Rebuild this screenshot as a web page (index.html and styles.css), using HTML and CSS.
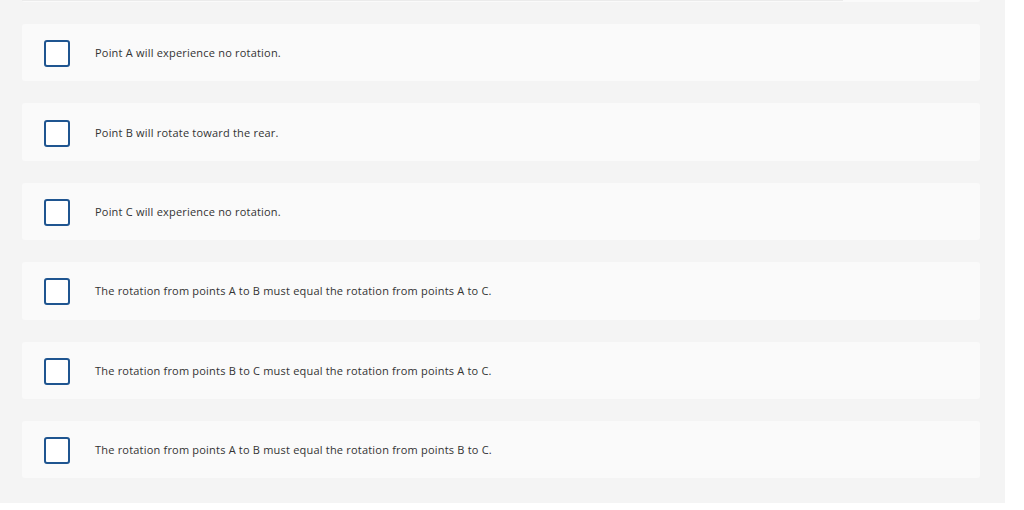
FILE: index.html
```html
<!DOCTYPE html>
<html>
<head>
<meta charset="utf-8">
<link rel="stylesheet" href="styles.css">
</head>
<body>
<div class="panel">
  <div class="stub"><div class="stub-line"></div></div>
  <div class="options">
    <label class="option"><span class="box"></span><span class="text">Point A will experience no rotation.</span></label>
    <label class="option"><span class="box"></span><span class="text">Point B will rotate toward the rear.</span></label>
    <label class="option"><span class="box"></span><span class="text">Point C will experience no rotation.</span></label>
    <label class="option"><span class="box"></span><span class="text">The rotation from points A to B must equal the rotation from points A to C.</span></label>
    <label class="option"><span class="box"></span><span class="text">The rotation from points B to C must equal the rotation from points A to C.</span></label>
    <label class="option"><span class="box"></span><span class="text">The rotation from points A to B must equal the rotation from points B to C.</span></label>
  </div>
</div>
</body>
</html>
```

FILE: styles.css
```css
html, body {
  margin: 0;
  padding: 0;
  background: #ffffff;
}
.panel {
  width: 1005px;
  height: 503px;
  box-sizing: border-box;
  background: #f4f4f4;
  padding: 0 25px 0 22px;
  font-family: "Open Sans", "Liberation Sans", sans-serif;
}
.stub {
  height: 2px;
  background: #fafafa;
  border-radius: 0 0 3px 3px;
}
.stub-line {
  width: 821px;
  height: 1px;
  background: #ebebeb;
}
.options {
  margin-top: 22px;
  display: flex;
  flex-direction: column;
  gap: 22px;
}
.option {
  display: flex;
  align-items: center;
  height: 57.4px;
  background: #fafafa;
  border-radius: 3px;
  padding-left: 22px;
  box-sizing: border-box;
}
.box {
  width: 26px;
  height: 27px;
  box-sizing: border-box;
  border: 2px solid #1f5590;
  border-radius: 3px;
  background: #ffffff;
  margin-top: 2px;
  flex: none;
}
.text {
  margin-left: 25px;
  font-size: 11px;
  letter-spacing: 0.2px;
  color: #333333;
}
```
